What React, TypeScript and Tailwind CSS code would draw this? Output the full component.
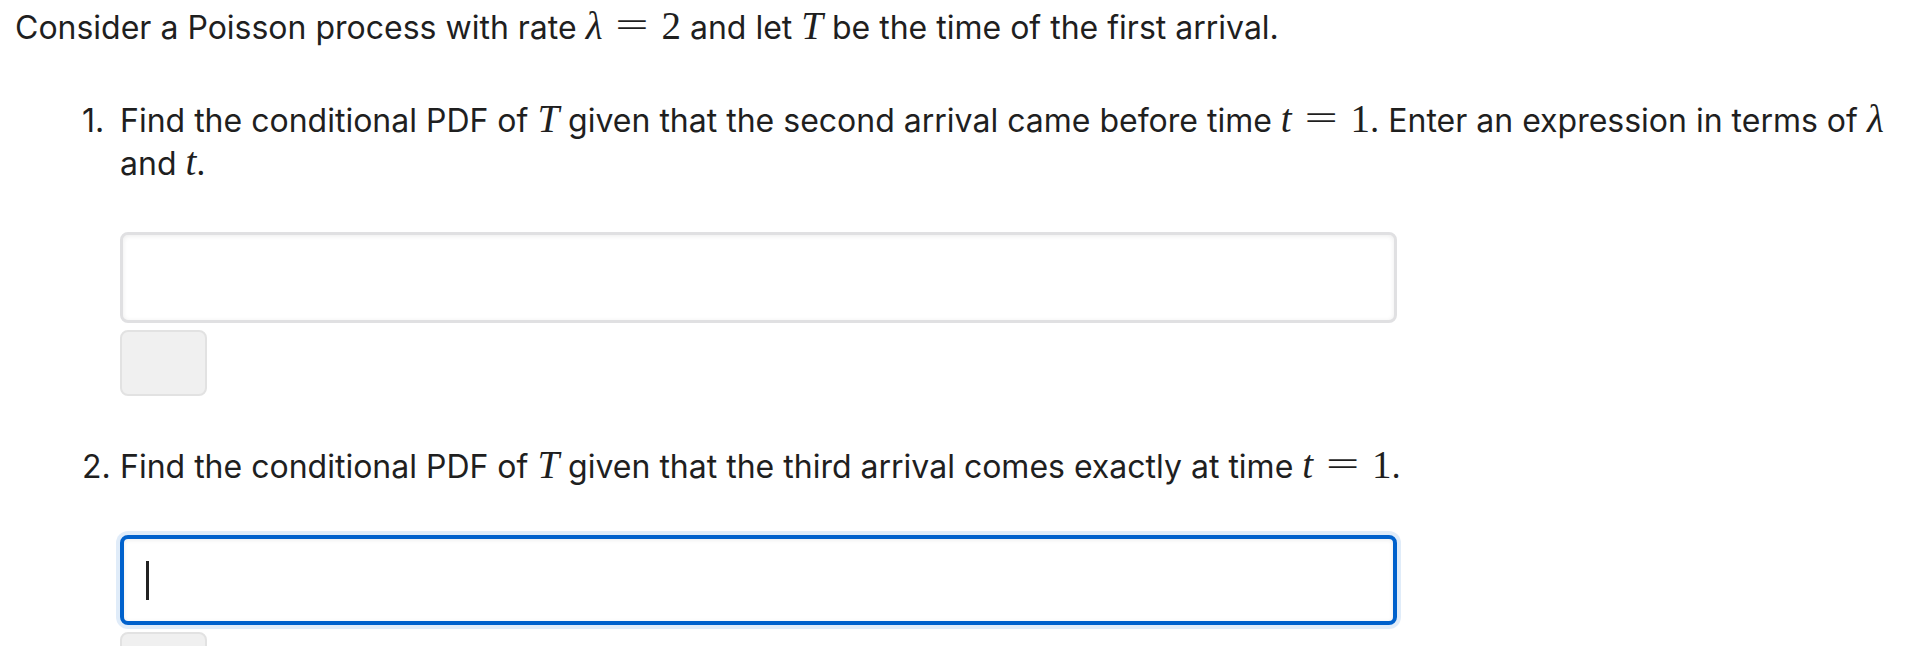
const math = "font-['Liberation_Serif',serif] italic text-[39px] leading-none";
const num = "font-['Liberation_Serif',serif] text-[39px] leading-none";
const eq = "mx-[11px] font-['DejaVu_Sans',sans-serif] font-extralight text-[44px] leading-[36px]";

function Input({ focused }: { focused?: boolean }) {
  return (
    <div
      className={
        focused
          ? "w-[1277px] h-[90px] rounded-[8px] border-[4px] border-[#0061cc] bg-white shadow-[0_0_0_4px_rgba(0,97,204,0.12),inset_0_1px_4px_rgba(0,0,0,0.08)] flex items-center pl-[22px]"
          : "w-[1277px] h-[91px] rounded-[8px] border-[3px] border-[#e0e0e2] bg-white shadow-[inset_0_1px_5px_rgba(0,0,0,0.08)]"
      }
    >
      {focused && <span className="block w-[3px] h-[39px] bg-[#222]" />}
    </div>
  );
}

function SubmitButton() {
  return (
    <div className="mt-[7px] w-[87px] h-[66px] rounded-[8px] border-[2px] border-[#e2e2e2] bg-[#f0f0f0]" />
  );
}

export default function App() {
  return (
    <div className="w-[1918px] h-[646px] overflow-hidden bg-white text-[#1f1f1f] font-['Inter',sans-serif] text-[32px] leading-[43px]">
      <p className="pt-[6px] pl-[15px]">
        Consider a Poisson process with rate <span className={math}>λ</span>
        <span className={eq}>=</span>
        <span className={num}>2</span> and let <span className={math}>T</span> be the time of the
        first arrival.
      </p>

      <ol className="mt-[50px] pl-[120px] pr-[18px]">
        <li className="relative">
          <span className="absolute -left-[38px] top-0">1.</span>
          <p>
            Find the conditional PDF of <span className={math}>T</span> given that the second arrival
            came before time <span className={math}>t</span>
            <span className={eq}>=</span>
            <span className={num}>1</span>. Enter an expression in terms of{" "}
            <span className={math}>λ</span> and <span className={math}>t</span>.
          </p>
          <div className="mt-[47px]">
            <Input />
            <SubmitButton />
          </div>
        </li>

        <li className="relative mt-[49px]">
          <span className="absolute -left-[38px] top-0">2.</span>
          <p>
            Find the conditional PDF of <span className={math}>T</span> given that the third arrival
            comes exactly at time <span className={math}>t</span>
            <span className={eq}>=</span>
            <span className={num}>1</span>.
          </p>
          <div className="mt-[47px]">
            <Input focused />
            <SubmitButton />
          </div>
        </li>
      </ol>
    </div>
  );
}
